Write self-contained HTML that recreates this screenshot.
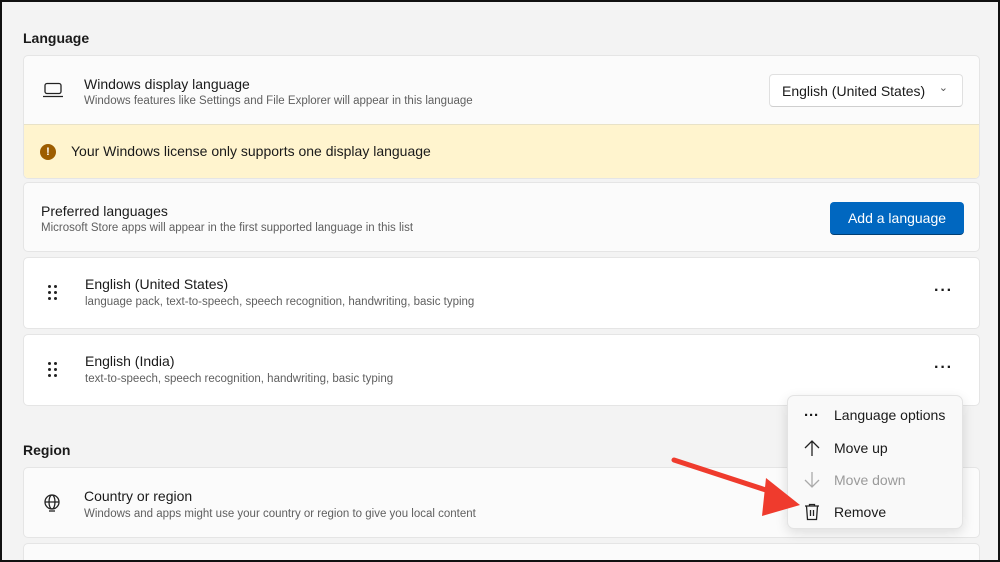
<!DOCTYPE html>
<html style="overflow:hidden"><head><meta charset="utf-8"><style>
*{box-sizing:border-box;margin:0;padding:0}
html,body{width:1000px;height:562px;overflow:hidden}
body{background:#f3f3f3;font-family:"Liberation Sans",sans-serif;color:#1a1a1a;position:relative}
.abs{position:absolute}
.card{position:absolute;left:23px;width:957px;background:#fbfbfb;border:1px solid #e5e5e5;border-radius:5px;overflow:hidden}
.t{position:absolute;font-size:14px;color:#1a1a1a}
.s{position:absolute;font-size:11.5px;color:#5f5f5f}
.h{position:absolute;left:23px;font-size:14px;font-weight:bold;color:#1a1a1a}
.dots{position:absolute;width:8px;height:16px}
.dots i{position:absolute;width:3px;height:3px;border-radius:50%;background:#222}
.more{position:absolute;font-size:16px;letter-spacing:1px;font-weight:bold}
.mi{position:absolute;left:46px;font-size:14px}
</style></head><body>
<div class="abs" style="left:128px;top:-29px;font-size:29px;color:#777">Language</div>
<div class="abs" style="left:292px;top:-29px;font-size:29px;color:#111">Language &amp; region</div>

<div class="h" style="top:30px">Language</div>
<div class="card" style="top:55px;height:124px">
  <svg class="abs" style="left:18px;top:26px" width="22" height="16" viewBox="0 0 22 16"><rect x="3" y="1.5" width="16" height="10" rx="2" fill="none" stroke="#222" stroke-width="1.3"/><line x1="1" y1="14.5" x2="21" y2="14.5" stroke="#222" stroke-width="1.3"/></svg>
  <div class="t" style="left:60px;top:20px">Windows display language</div>
  <div class="s" style="left:60px;top:39px">Windows features like Settings and File Explorer will appear in this language</div>
  <div class="abs" style="left:745px;top:18px;width:194px;height:33px;background:#fff;border:1px solid #e0e0e0;border-bottom-color:#cfcfcf;border-radius:4px;font-size:14px;padding:8px 0 0 12px">English (United States)<span style="position:absolute;right:14px;top:6px;font-size:11px;color:#555">&#8964;</span></div>
  <div class="abs" style="left:0;top:68px;width:100%;height:56px;background:#fff4ce;border-top:1px solid #e8e2c8">
    <div class="abs" style="left:16px;top:19px;width:16px;height:16px;border-radius:50%;background:#9d5d00;color:#fff;font-size:11px;font-weight:bold;text-align:center;line-height:16px">!</div>
    <div class="t" style="left:47px;top:18px">Your Windows license only supports one display language</div>
  </div>
</div>

<div class="card" style="top:182px;height:70px">
  <div class="t" style="left:17px;top:20px">Preferred languages</div>
  <div class="s" style="left:17px;top:39px">Microsoft Store apps will appear in the first supported language in this list</div>
  <div class="abs" style="left:806px;top:19px;width:134px;height:33px;background:#0067c0;border-radius:4px;color:#fff;font-size:14px;text-align:center;line-height:33px;border-bottom:1px solid #003e73">Add a language</div>
</div>

<div class="card" style="top:257px;height:72px;background:#fff">
  <div class="dots" style="left:24px;top:27px"><i style="left:0;top:0"></i><i style="left:6px;top:0"></i><i style="left:0;top:6px"></i><i style="left:6px;top:6px"></i><i style="left:0;top:12px"></i><i style="left:6px;top:12px"></i></div>
  <div class="t" style="left:61px;top:18px">English (United States)</div>
  <div class="s" style="left:61px;top:38px">language pack, text-to-speech, speech recognition, handwriting, basic typing</div>
  <div class="more" style="left:910px;top:24px">&middot;&middot;&middot;</div>
</div>

<div class="card" style="top:334px;height:72px;background:#fff">
  <div class="dots" style="left:24px;top:27px"><i style="left:0;top:0"></i><i style="left:6px;top:0"></i><i style="left:0;top:6px"></i><i style="left:6px;top:6px"></i><i style="left:0;top:12px"></i><i style="left:6px;top:12px"></i></div>
  <div class="t" style="left:61px;top:18px">English (India)</div>
  <div class="s" style="left:61px;top:38px">text-to-speech, speech recognition, handwriting, basic typing</div>
  <div class="more" style="left:910px;top:24px">&middot;&middot;&middot;</div>
</div>

<div class="h" style="top:442px">Region</div>
<div class="card" style="top:467px;height:71px">
  <svg class="abs" style="left:18px;top:25px" width="20" height="20" viewBox="0 0 20 20" fill="none" stroke="#222" stroke-width="1.3"><circle cx="10" cy="9" r="7"/><ellipse cx="10" cy="9" rx="3" ry="7"/><line x1="3" y1="9" x2="17" y2="9"/><line x1="7" y1="18" x2="13" y2="18"/></svg>
  <div class="t" style="left:60px;top:20px">Country or region</div>
  <div class="s" style="left:60px;top:40px">Windows and apps might use your country or region to give you local content</div>
</div>
<div class="card" style="top:543px;height:40px"></div>

<div class="abs" style="left:787px;top:395px;width:176px;height:134px;background:#f9f9f9;border:1px solid #e3e3e3;border-radius:7px;box-shadow:0 4px 12px rgba(0,0,0,.12)">
  <div class="abs" style="left:16px;top:11px;font-size:15px;font-weight:bold">&middot;&middot;&middot;</div>
  <div class="mi" style="top:11px">Language options</div>
  <svg class="abs" style="left:14px;top:42px" width="20" height="20" viewBox="0 0 20 20" fill="none" stroke="#222" stroke-width="1.3"><path d="M10 18V3M3 10l7-7 7 7"/></svg>
  <div class="mi" style="top:44px">Move up</div>
  <svg class="abs" style="left:14px;top:74px" width="20" height="20" viewBox="0 0 20 20" fill="none" stroke="#aaa" stroke-width="1.3"><path d="M10 2v15M3 10l7 7 7-7"/></svg>
  <div class="mi" style="top:76px;color:#9a9a9a">Move down</div>
  <svg class="abs" style="left:15px;top:106px" width="18" height="20" viewBox="0 0 18 20" fill="none" stroke="#222" stroke-width="1.3"><path d="M2 4h14M6.5 4V2.5h5V4M3.5 4l1 13.5h9l1-13.5M7.5 8v6M10.5 8v6"/></svg>
  <div class="mi" style="top:108px">Remove</div>
</div>

<svg class="abs" style="left:0;top:0" width="1000" height="562"><line x1="674" y1="460" x2="772" y2="492" stroke="#ef3b2d" stroke-width="5" stroke-linecap="round"/><polygon points="800,505 766,478 762,516" fill="#ef3b2d"/></svg>
<div class="abs" style="left:0;top:0;width:1000px;height:562px;border:2px solid #111;pointer-events:none"></div>
</body></html>
